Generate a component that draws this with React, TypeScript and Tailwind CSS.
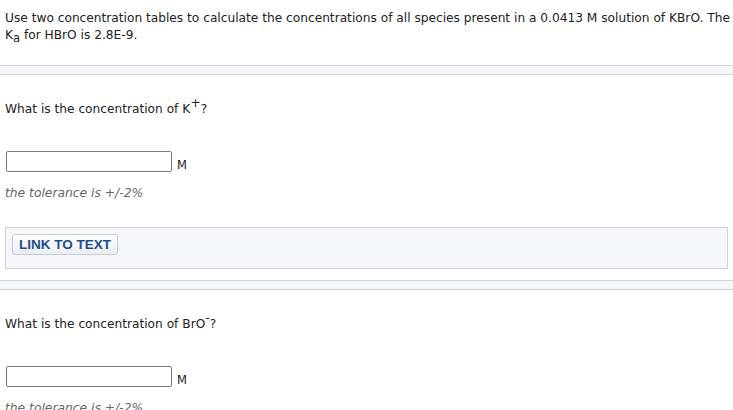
import React from 'react';

const Separator: React.FC = () => (
  <div className="h-[10px] w-full border-y border-[#c9d2de] bg-[#f4f7fa]" />
);

const AnswerBox: React.FC = () => (
  <div className="flex items-end pl-[6px]">
    <input
      type="text"
      className="h-[21px] w-[166px] rounded-[2px] border border-[#7a7a7a] bg-white outline-none"
    />
    <span className="ml-[5px] text-[11.5px] leading-[14px] text-[#222]">M</span>
  </div>
);

const Tolerance: React.FC = () => (
  <p className="pl-[5px] text-[12.3px] italic leading-[16px] text-[#666]">the tolerance is +/-2%</p>
);

export default function App() {
  return (
    <div
      className="h-[410px] w-[733px] overflow-hidden bg-white text-[#222]"
      style={{ fontFamily: '"DejaVu Sans", Verdana, sans-serif' }}
    >
      <p className="whitespace-nowrap pl-[5px] pt-[10px] text-[12.2px] leading-[17px]">
        Use two concentration tables to calculate the concentrations of all species present in a 0.0413 M solution of KBrO. The
        <br />
        K<sub className="text-[11.5px] leading-none">a</sub> for HBrO is 2.8E-9.
      </p>

      <div className="mt-[21px]">
        <Separator />
      </div>

      <p className="mt-[26px] pl-[5px] text-[12.2px] leading-[17px]">
        What is the concentration of K<sup className="text-[12.5px] leading-none">+</sup>?
      </p>

      <div className="mt-[33px]">
        <AnswerBox />
      </div>

      <div className="mt-[13px]">
        <Tolerance />
      </div>

      <div className="mx-[5px] mt-[26px] flex h-[42px] items-start border border-[#c9d2de] bg-[#f4f7fa] pl-[6px] pt-[6px]">
        <button
          className="h-[21px] rounded-[3px] border border-[#c4ccd6] bg-gradient-to-b from-[#ffffff] to-[#e9edf2] px-[6px] text-[13.5px] font-bold leading-[19px] text-[#1e4d8c]"
          style={{ fontFamily: '"Liberation Sans", Arial, sans-serif' }}
        >
          LINK TO TEXT
        </button>
      </div>

      <div className="mt-[11px]">
        <Separator />
      </div>

      <p className="mt-[26px] pl-[5px] text-[12.2px] leading-[17px]">
        What is the concentration of BrO<sup className="text-[12.5px] leading-none">-</sup>?
      </p>

      <div className="mt-[33px]">
        <AnswerBox />
      </div>

      <div className="mt-[13px]">
        <Tolerance />
      </div>
    </div>
  );
}
